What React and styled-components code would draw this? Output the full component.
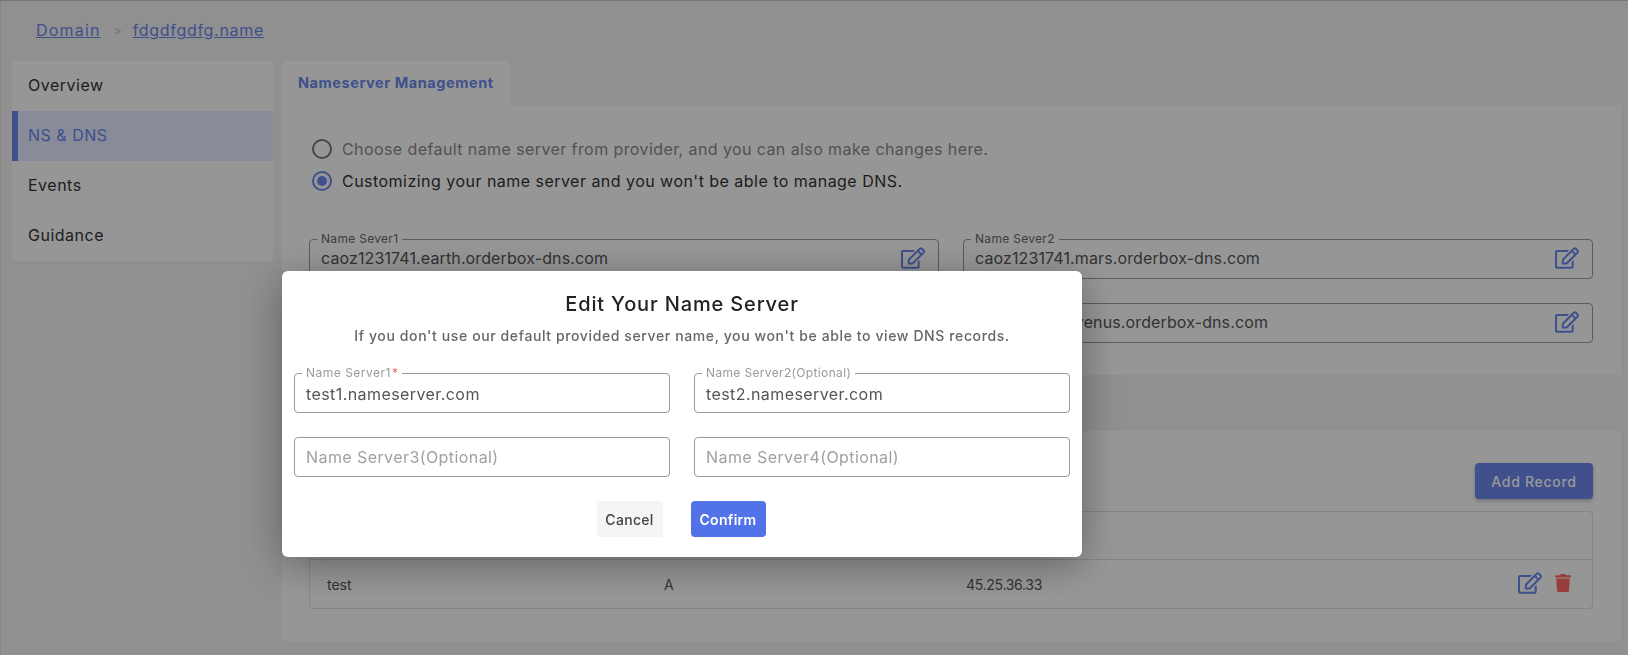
import styled, { createGlobalStyle } from 'styled-components';
import { FaRegEdit, FaTrash } from 'react-icons/fa';

const primary = '#6a85ec';

const GlobalStyle = createGlobalStyle`
  html, body {
    margin: 0;
    padding: 0;
    height: 100%;
    background: #f0f0f0;
    font-family: Inter, "Open Sans", sans-serif;
    color: #333;
    overflow: hidden;
  }
  * {
    box-sizing: border-box;
  }
`;

const Page = styled.div`
  height: 100vh;
  padding: 0 7px 0 11px;
  border-top: 1px solid #c4c4c4;
  border-left: 1px solid #e0e0e0;
`;

const Breadcrumb = styled.nav`
  height: 60px;
  padding: 0 0 2px 24px;
  display: flex;
  align-items: center;
  font-size: 16px;
`;

const CrumbLink = styled.a`
  color: ${primary};
  text-decoration: underline;
  letter-spacing: ${p => p.$spacing};
`;

const CrumbSep = styled.span`
  color: #bbb;
  font-size: 12px;
  margin: 0 11px 0 13px;
`;

const Main = styled.div`
  display: flex;
  align-items: flex-start;
  gap: 9px;
`;

const Sidebar = styled.ul`
  list-style: none;
  margin: 0;
  padding: 0;
  width: 261px;
  flex: none;
  background: #fbfbfb;
`;

const SideItem = styled.li`
  height: 50px;
  display: flex;
  align-items: center;
  padding: 0 0 2px ${p => (p.$active ? '10px' : '16px')};
  border-left: ${p => (p.$active ? `6px solid ${primary}` : 'none')};
  background: ${p => (p.$active ? '#e3e9fd' : 'transparent')};
  color: ${p => (p.$active ? primary : '#333')};
  font-size: 16px;
  letter-spacing: 0.5px;
`;

const Content = styled.div`
  flex: 1;
  min-width: 0;
`;

const Tab = styled.div`
  width: 228px;
  height: 44px;
  display: flex;
  align-items: center;
  padding: 0 0 2px 16px;
  background: #fbfbfb;
  border-radius: 4px 4px 0 0;
  color: ${primary};
  font-size: 14.5px;
  font-weight: 700;
  letter-spacing: 0.55px;
`;

const ServerPanel = styled.section`
  height: 270px;
  padding: 28px 28px 0 27px;
  background: #fbfbfb;
`;

const RadioRow = styled.label`
  height: 32px;
  display: flex;
  align-items: center;
  gap: 10px;
  padding-left: 3px;
  font-size: 16px;
  letter-spacing: ${p => (p.$checked ? '0.47px' : '0.41px')};
  color: ${p => (p.$checked ? '#333' : '#888')};
`;

const RadioMark = styled.span`
  width: 20px;
  height: 20px;
  flex: none;
  display: flex;
  align-items: center;
  justify-content: center;
  border-radius: 50%;
  border: 2px solid ${p => (p.$checked ? primary : '#777')};

  &::after {
    content: '';
    width: 10px;
    height: 10px;
    border-radius: 50%;
    background: ${p => (p.$checked ? primary : 'transparent')};
  }
`;

const FieldGrid = styled.div`
  display: grid;
  grid-template-columns: repeat(2, 1fr);
  gap: 24px;
  margin-top: ${p => p.$top || 0}px;
`;

const Field = styled.div`
  position: relative;
  height: 40px;
  display: flex;
  align-items: center;
  justify-content: space-between;
  padding: 2px 11px 0;
  border: 1px solid #999;
  border-radius: 4px;
  font-size: 16px;
  letter-spacing: 0.42px;
  color: #555;
`;

const ServerField = styled(Field)`
  padding: 0 13px 2px 11px;
  letter-spacing: 0.12px;
`;

const EmptyField = styled(Field)`
  padding: 0 11px;
  color: #a0a0a0;
`;

const FieldLabel = styled.span`
  position: absolute;
  top: -8px;
  left: 7px;
  padding: 0 4px;
  background: ${p => p.$bg};
  font-size: 12px;
  line-height: 14px;
  letter-spacing: ${p => p.$spacing || '0.3px'};
  color: ${p => p.$color};
`;

const Required = styled.span`
  color: #ee6b6b;
  margin-left: 1px;
`;

const EditIcon = styled(FaRegEdit)`
  flex: none;
  color: ${primary};
  font-size: 24px;
`;

const TrashIcon = styled(FaTrash)`
  flex: none;
  color: #ff6464;
  font-size: 18px;
`;

const SubTabs = styled.div`
  height: 56px;
`;

const RecordsPanel = styled.section`
  height: 210px;
  padding: 32px 28px 0 27px;
  background: #fbfbfb;
`;

const Toolbar = styled.div`
  display: flex;
  justify-content: flex-end;
`;

const AddButton = styled.button`
  width: 118px;
  height: 36px;
  border: none;
  border-radius: 4px;
  background: ${primary};
  color: #fff;
  font: 500 14px Inter, sans-serif;
  letter-spacing: 0.7px;
  box-shadow: 0 2px 4px rgba(0, 0, 0, 0.25);
`;

const Table = styled.div`
  margin-top: 12px;
  border: 1px solid #ddd;
  border-radius: 4px;
`;

const HeadRow = styled.div`
  height: 47px;
`;

const Row = styled.div`
  height: 49px;
  display: grid;
  grid-template-columns: 337px 302px 1fr auto;
  align-items: center;
  padding: 0 20px 0 17px;
  font-size: 14px;
  color: #555;
  border-top: 1px solid #ddd;
`;

const RowValue = styled.span`
  letter-spacing: -0.3px;
`;

const RowActions = styled.div`
  display: flex;
  align-items: center;
  gap: 12px;
  margin-top: -2px;
`;

const Overlay = styled.div`
  position: fixed;
  inset: 0;
  background: rgba(0, 0, 0, 0.4);
`;

const Modal = styled.div`
  position: absolute;
  left: 282px;
  top: 271px;
  width: 800px;
  height: 286px;
  padding: 21px 12px 0;
  background: #fff;
  border-radius: 6px;
  box-shadow: 0 8px 40px rgba(0, 0, 0, 0.35);
`;

const ModalTitle = styled.h2`
  margin: 0;
  text-align: center;
  font-size: 20px;
  line-height: 24px;
  font-weight: 500;
  letter-spacing: 0.85px;
  color: #222;
`;

const ModalHint = styled.p`
  margin: 10px 0 0;
  text-align: center;
  font-size: 14px;
  line-height: 20px;
  font-weight: 500;
  letter-spacing: 0.61px;
  color: #666;
`;

const ModalFooter = styled.div`
  display: flex;
  justify-content: center;
  gap: 28px;
  margin-top: 24px;
  padding-right: 2px;
`;

const ModalButton = styled.button`
  height: 36px;
  width: ${p => (p.$primary ? '75px' : '66px')};
  border: none;
  border-radius: 4px;
  background: ${p => (p.$primary ? '#5272e8' : '#f5f5f5')};
  color: ${p => (p.$primary ? '#fff' : '#444')};
  font: ${p => (p.$primary ? 600 : 500)} 14px Inter, sans-serif;
  letter-spacing: 0.3px;
`;

// the third server sits completely behind the dialog, so it only needs its box
const servers = [
  { label: 'Name Sever1', value: 'caoz1231741.earth.orderbox-dns.com' },
  { label: 'Name Sever2', value: 'caoz1231741.mars.orderbox-dns.com' },
  { label: '', value: '' },
  { label: '', value: 'caoz1231741.venus.orderbox-dns.com' },
];

const App = () => {
  return (
    <>
      <GlobalStyle />
      <Page>
        <Breadcrumb>
          <CrumbLink $spacing="1.2px">Domain</CrumbLink>
          <CrumbSep>&gt;</CrumbSep>
          <CrumbLink $spacing="0.7px">fdgdfgdfg.name</CrumbLink>
        </Breadcrumb>
        <Main>
          <Sidebar>
            <SideItem>Overview</SideItem>
            <SideItem $active>NS &amp; DNS</SideItem>
            <SideItem>Events</SideItem>
            <SideItem>Guidance</SideItem>
          </Sidebar>
          <Content>
            <Tab>Nameserver Management</Tab>
            <ServerPanel>
              <RadioRow>
                <RadioMark />
                Choose default name server from provider, and you can also make changes here.
              </RadioRow>
              <RadioRow $checked>
                <RadioMark $checked />
                Customizing your name server and you won't be able to manage DNS.
              </RadioRow>
              <FieldGrid $top={42}>
                {servers.map((s, i) => (
                  <ServerField key={i}>
                    {s.label && <FieldLabel $bg="#fbfbfb" $color="#666">{s.label}</FieldLabel>}
                    <span>{s.value}</span>
                    <EditIcon />
                  </ServerField>
                ))}
              </FieldGrid>
            </ServerPanel>
            <SubTabs />
            <RecordsPanel>
              <Toolbar>
                <AddButton>Add Record</AddButton>
              </Toolbar>
              <Table>
                <HeadRow />
                <Row>
                  <span>test</span>
                  <span>A</span>
                  <RowValue>45.25.36.33</RowValue>
                  <RowActions>
                    <EditIcon />
                    <TrashIcon />
                  </RowActions>
                </Row>
              </Table>
            </RecordsPanel>
          </Content>
        </Main>
      </Page>
      <Overlay>
        <Modal>
          <ModalTitle>Edit Your Name Server</ModalTitle>
          <ModalHint>If you don't use our default provided server name, you won't be able to view DNS records.</ModalHint>
          <FieldGrid $top={27}>
            <Field>
              <FieldLabel $bg="#fff" $color="#999" $spacing="0.5px">Name Server1<Required>*</Required></FieldLabel>
              test1.nameserver.com
            </Field>
            <Field>
              <FieldLabel $bg="#fff" $color="#999" $spacing="0.35px">Name Server2(Optional)</FieldLabel>
              test2.nameserver.com
            </Field>
            <EmptyField>Name Server3(Optional)</EmptyField>
            <EmptyField>Name Server4(Optional)</EmptyField>
          </FieldGrid>
          <ModalFooter>
            <ModalButton>Cancel</ModalButton>
            <ModalButton $primary>Confirm</ModalButton>
          </ModalFooter>
        </Modal>
      </Overlay>
    </>
  );
};

export default App;
